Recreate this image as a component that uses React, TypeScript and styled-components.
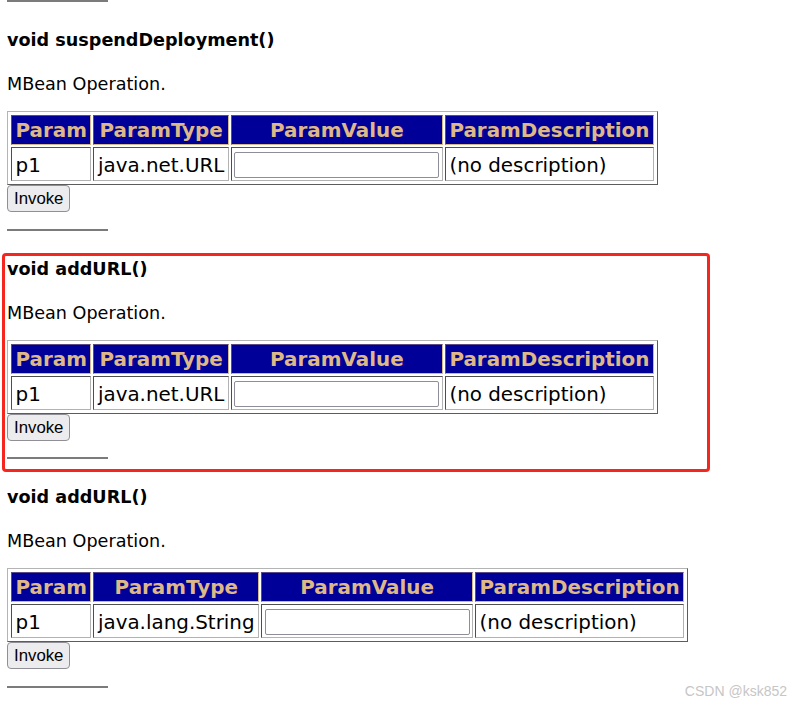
import styled, { createGlobalStyle } from 'styled-components'

const GlobalStyle = createGlobalStyle`
  html,
  body {
    margin: 0;
    padding: 0;
    background: #fff;
  }
  body {
    font-family: 'DejaVu Sans', Verdana, sans-serif;
    color: #000;
  }
`

type Param = {
  name: string
  type: string
  description?: string
}

type Operation = {
  name: string
  params: Param[]
  highlighted?: boolean
}

const operations: Operation[] = [
  { name: 'suspendDeployment', params: [{ name: 'p1', type: 'java.net.URL' }] },
  {
    name: 'addURL',
    params: [{ name: 'p1', type: 'java.net.URL' }],
    highlighted: true
  },
  { name: 'addURL', params: [{ name: 'p1', type: 'java.lang.String' }] }
]

const Page = styled.div`
  position: relative;
  min-height: 705px;
  padding: 0 7px;
  box-sizing: border-box;
  overflow: hidden;
`

const Rule = styled.hr`
  width: 101px;
  height: 2px;
  margin: 0;
  border: 0;
  background: #7b7b7b;
`

const Section = styled.section`
  position: relative;
  padding-bottom: 16.5px;
`

const Title = styled.div`
  margin-top: 28px;
  font-size: 17.6px;
  font-weight: bold;
  line-height: 20px;
`

const Description = styled.div`
  margin-top: 24px;
  font-size: 17.6px;
  line-height: 20px;
`

const ParamTable = styled.table`
  margin-top: 17px;
  padding: 1px;
  border: 1px solid;
  border-color: #b4b4b4 #5c5c5c #5c5c5c #b4b4b4;
  border-spacing: 2px;
  font-size: 19.9px;
  line-height: 24px;
`

const HeadCell = styled.th`
  padding: 3px 3.5px 1px;
  border: 1px solid;
  border-color: #5a4a8a #d6b88c #d6b88c #5a4a8a;
  background: #000099;
  color: #deb887;
  font-weight: bold;
  text-align: center;
  white-space: nowrap;
`

const Cell = styled.td<{ $field?: boolean }>`
  padding: ${({ $field }) => ($field ? '4px 2.5px 2px' : '5px 3.5px 1px')};
  border: 1px solid;
  border-color: #4e4e4e #b2b2b2 #b2b2b2 #4e4e4e;
  text-align: left;
  vertical-align: middle;
  white-space: nowrap;
`

const ValueInput = styled.input`
  display: block;
  width: 205px;
  height: 26px;
  margin: 0;
  padding: 0 3px;
  box-sizing: border-box;
  border: 1px solid #8e8e98;
  border-radius: 2px;
  background: #fff;
  font-size: 16px;
`

const InvokeButton = styled.button`
  display: block;
  height: 27px;
  margin: 0;
  padding: 0 6px;
  border: 1px solid #8f8f95;
  border-radius: 4px;
  background: #ececef;
  color: #000;
  font-family: 'Liberation Sans', Arial, sans-serif;
  font-size: 16.8px;
  line-height: 25px;
  cursor: pointer;
`

const Highlight = styled.div`
  position: absolute;
  left: -5px;
  top: 24px;
  width: 708px;
  height: 219px;
  box-sizing: border-box;
  border: 3px solid #f4261d;
  border-radius: 4px;
  pointer-events: none;
`

const Watermark = styled.span`
  position: absolute;
  right: 12px;
  bottom: 6px;
  color: #c6c6c6;
  font-family: 'Liberation Sans', Arial, sans-serif;
  font-size: 14px;
  line-height: 16px;
`

const OperationBlock = ({ operation }: { operation: Operation }) => (
  <Section>
    <Rule />
    <Title>void {operation.name}()</Title>
    <Description>MBean Operation.</Description>
    <ParamTable>
      <thead>
        <tr>
          <HeadCell>Param</HeadCell>
          <HeadCell>ParamType</HeadCell>
          <HeadCell>ParamValue</HeadCell>
          <HeadCell>ParamDescription</HeadCell>
        </tr>
      </thead>
      <tbody>
        {operation.params.map(param => (
          <tr key={param.name}>
            <Cell>{param.name}</Cell>
            <Cell>{param.type}</Cell>
            <Cell $field>
              <ValueInput type="text" />
            </Cell>
            <Cell>{param.description ?? '(no description)'}</Cell>
          </tr>
        ))}
      </tbody>
    </ParamTable>
    <InvokeButton type="button">Invoke</InvokeButton>
    {operation.highlighted && <Highlight />}
  </Section>
)

export default function App() {
  return (
    <Page>
      <GlobalStyle />
      {operations.map((operation, i) => (
        <OperationBlock key={i} operation={operation} />
      ))}
      <Rule />
      <Watermark>CSDN @ksk852</Watermark>
    </Page>
  )
}
